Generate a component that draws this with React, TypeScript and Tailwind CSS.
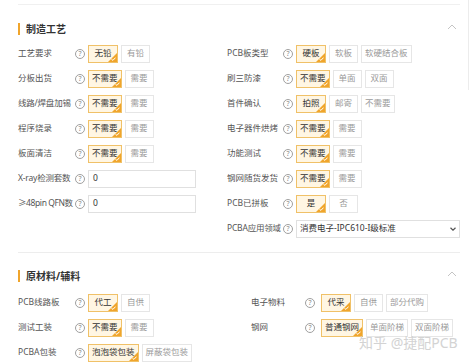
import React from "react";

function Q() {
  return (
    <span className="flex h-[10px] w-[10px] shrink-0 items-center justify-center rounded-full border border-[#a0a0a0] text-[7px] leading-none text-[#888]">
      ?
    </span>
  );
}

function Btn({ t, sel }: { t: string; sel?: boolean }) {
  if (sel) {
    return (
      <span className="relative flex h-[18px] min-w-[30px] items-center justify-center border border-[#f0c168] bg-[#fff6e3] px-[3px] text-[#333]">
        {t}
        <span className="absolute bottom-0 right-0 h-0 w-0 border-b-[9px] border-l-[9px] border-b-[#f0a52c] border-l-transparent" />
        <svg className="absolute bottom-[1px] right-[1px]" width="5" height="4" viewBox="0 0 5 4">
          <path d="M0.4 2.1 L1.9 3.4 L4.6 0.6" stroke="white" strokeWidth="1" fill="none" />
        </svg>
      </span>
    );
  }
  return (
    <span className="flex h-[18px] min-w-[29px] items-center justify-center border border-[#e6e6e6] bg-white px-[3px] text-[#9a9a9a]">
      {t}
    </span>
  );
}

function Row({
  label,
  children,
  lw = "w-[57px]",
  gap = "ml-[3px]",
  lc = "",
}: {
  label: string;
  children: React.ReactNode;
  lw?: string;
  gap?: string;
  lc?: string;
}) {
  return (
    <div className="flex h-[25px] items-center">
      <span className={`${lw} ${lc} shrink-0 whitespace-nowrap text-[#555]`}>{label}</span>
      <Q />
      <div className={`${gap} flex gap-[3px]`}>{children}</div>
    </div>
  );
}

function Up() {
  return (
    <svg width="10" height="6" viewBox="0 0 10 6" className="mr-[3px] mt-[-4px]">
      <path d="M1 5 L5 1 L9 5" stroke="#c4c4c4" strokeWidth="1" fill="none" />
    </svg>
  );
}

function Heading({ t }: { t: string }) {
  return (
    <div className="flex h-[18px] items-center justify-between">
      <div className="flex items-center">
        <span className="h-[12px] w-[2px] bg-[#f0a52c]" />
        <span className="ml-[6px] text-[10px] font-bold text-[#333]">{t}</span>
      </div>
      <Up />
    </div>
  );
}

export default function App() {
  return (
    <div className="relative flex h-[362px] w-[474px] overflow-hidden bg-white font-['Noto_Sans','Noto_Sans_CJK_SC',sans-serif] text-[8.5px] leading-none">
      <div className="ml-[18px] w-[442px] shrink-0">
        <div className="mt-[4px] border-t border-[#f0f0f0]" />
        <div className="mt-[15px]">
          <Heading t="制造工艺" />
        </div>
        <div className="mt-[3px] flex">
          <div className="w-[209px] shrink-0">
            <Row label="工艺要求">
              <Btn t="无铅" sel />
              <Btn t="有铅" />
            </Row>
            <Row label="分板出货">
              <Btn t="不需要" sel />
              <Btn t="需要" />
            </Row>
            <Row label="线路/焊盘加锡" lc="tracking-[-0.2px]">
              <Btn t="不需要" sel />
              <Btn t="需要" />
            </Row>
            <Row label="程序烧录">
              <Btn t="不需要" sel />
              <Btn t="需要" />
            </Row>
            <Row label="板面清洁">
              <Btn t="不需要" sel />
              <Btn t="需要" />
            </Row>
            <Row label="X-ray检测套数" lc="tracking-[-0.2px]">
              <span className="flex h-[18px] w-[108px] items-center border border-[#e0e0e0] px-[4px] text-[#333]">0</span>
            </Row>
            <Row label="≥48pin QFN数" lc="tracking-[-0.4px]">
              <span className="flex h-[18px] w-[108px] items-center border border-[#e0e0e0] px-[4px] text-[#333]">0</span>
            </Row>
          </div>
          <div className="flex-1">
            <Row label="PCB板类型" lw="w-[56px]">
              <Btn t="硬板" sel />
              <Btn t="软板" />
              <Btn t="软硬结合板" />
            </Row>
            <Row label="刷三防漆" lw="w-[56px]">
              <Btn t="不需要" sel />
              <Btn t="单面" />
              <Btn t="双面" />
            </Row>
            <Row label="首件确认" lw="w-[56px]">
              <Btn t="拍照" sel />
              <Btn t="邮寄" />
              <Btn t="不需要" />
            </Row>
            <Row label="电子器件烘烤" lw="w-[56px]">
              <Btn t="不需要" sel />
              <Btn t="需要" />
            </Row>
            <Row label="功能测试" lw="w-[56px]">
              <Btn t="不需要" sel />
              <Btn t="需要" />
            </Row>
            <Row label="钢网随货发货" lw="w-[56px]">
              <Btn t="不需要" sel />
              <Btn t="需要" />
            </Row>
            <Row label="PCB已拼板" lw="w-[56px]">
              <Btn t="是" sel />
              <Btn t="否" />
            </Row>
            <Row label="PCBA应用领域" lw="w-[56px]" lc="tracking-[-0.2px]">
              <span className="flex h-[18px] w-[164px] items-center justify-between border border-[#e0e0e0] pl-[3px] pr-[3px] text-[#333]">
                消费电子-IPC610-I级标准
                <svg width="6" height="4" viewBox="0 0 6 4">
                  <path d="M0.5 0.8 L3 3.2 L5.5 0.8" stroke="#555" strokeWidth="1.2" fill="none" />
                </svg>
              </span>
            </Row>
          </div>
        </div>
        <div className="mt-[11px] border-t border-[#ededed]" />
        <div className="mt-[14px]">
          <Heading t="原材料/辅料" />
        </div>
        <div className="mt-[5px] flex">
          <div className="w-[233px] shrink-0">
            <Row label="PCB线路板">
              <Btn t="代工" sel />
              <Btn t="自供" />
            </Row>
            <Row label="测试工装">
              <Btn t="不需要" sel />
              <Btn t="需要" />
            </Row>
            <Row label="PCBA包装">
              <Btn t="泡泡袋包装" sel />
              <Btn t="屏蔽袋包装" />
            </Row>
          </div>
          <div className="flex-1">
            <Row label="电子物料" lw="w-[54px]" gap="ml-[6px]">
              <Btn t="代采" sel />
              <Btn t="自供" />
              <Btn t="部分代购" />
            </Row>
            <Row label="钢网" lw="w-[54px]" gap="ml-[6px]">
              <Btn t="普通钢网" sel />
              <Btn t="单面阶梯" />
              <Btn t="双面阶梯" />
            </Row>
          </div>
        </div>
      </div>
      <div className="ml-[8px] h-[90px] w-[1px] bg-[#ececec]" />
      <span className="absolute left-[359px] top-[336px] whitespace-nowrap text-[14px] leading-none text-[#cfcfcf] opacity-90">
        知乎 @捷配PCB
      </span>
    </div>
  );
}
